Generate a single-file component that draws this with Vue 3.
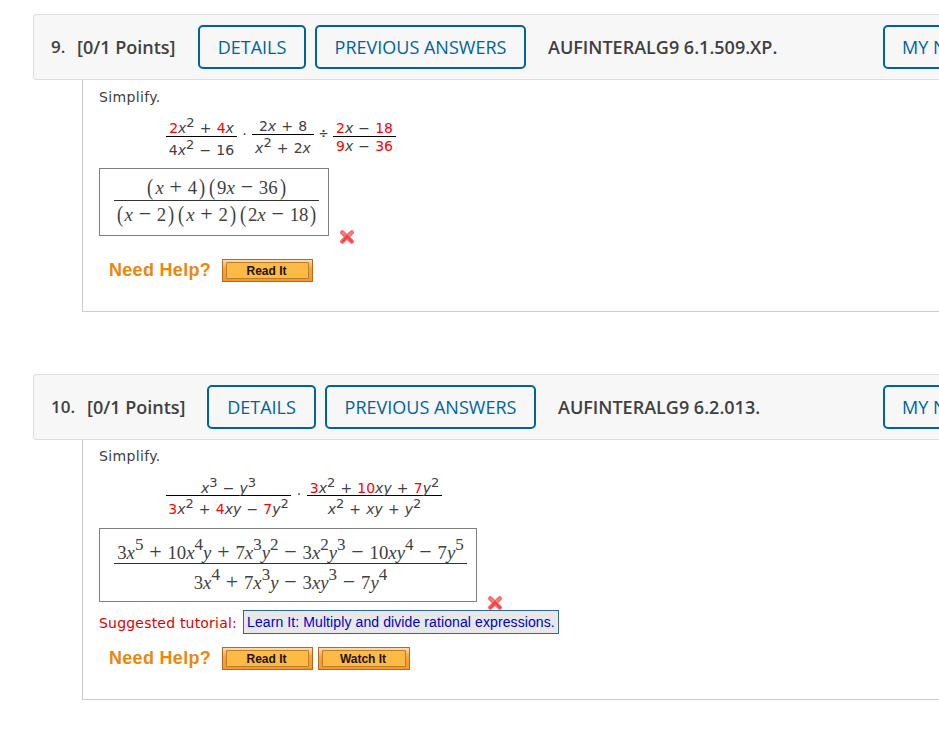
<script setup>
// Splits a compact expression string into styled pieces:
// [n] = randomised coefficient, ^n = exponent, letters = variables.
function parse(source) {
  const pieces = []
  const pattern = /\[(\d+)\]|\^(\d)|([a-z])|([+−])|(\d+)|([()])/g
  const kinds = ['coef', 'sup', 'var', 'op', 'digits', 'paren']
  for (const m of source.matchAll(pattern)) {
    const i = m.slice(1).findIndex((g) => g !== undefined)
    pieces.push({ kind: kinds[i], text: m[i + 1] })
  }
  return pieces
}

const questions = [
  {
    number: '9.',
    code: 'AUFINTERALG9 6.1.509.XP.',
    cls: 'first',
    given: [
      { width: 71, num: parse('[2]x^2 + [4]x'), den: parse('4x^2 − 16'), cls: 'tall' },
      { symbol: '·' },
      { width: 62, num: parse('2x + 8'), den: parse('x^2 + 2x'), cls: 'tall raised' },
      { symbol: '÷' },
      { width: 63, num: parse('[2]x − [18]'), den: parse('[9]x − [36]'), cls: '' },
    ],
    answer: { num: parse('(x + 4)(9x − 36)'), den: parse('(x − 2)(x + 2)(2x − 18)') },
    tutorial: '',
    help: ['Read It'],
  },
  {
    number: '10.',
    code: 'AUFINTERALG9 6.2.013.',
    cls: 'second',
    given: [
      { width: 125, num: parse('x^3 − y^3'), den: parse('[3]x^2 + [4]xy − [7]y^2'), cls: 'tall' },
      { symbol: '·' },
      { width: 135, num: parse('[3]x^2 + [10]xy + [7]y^2'), den: parse('x^2 + xy + y^2'), cls: 'tall' },
    ],
    answer: {
      num: parse('3x^5 + 10x^4y + 7x^3y^2 − 3x^2y^3 − 10xy^4 − 7y^5'),
      den: parse('3x^4 + 7x^3y − 3xy^3 − 7y^4'),
    },
    tutorial: 'Learn It: Multiply and divide rational expressions.',
    help: ['Read It', 'Watch It'],
  },
]
</script>

<template>
  <main class="page">
    <section v-for="q in questions" :key="q.number" class="question" :class="q.cls">
      <header class="bar">
        <span class="number">{{ q.number }}</span>
        <span class="points">[0/1 Points]</span>
        <button class="btn details">DETAILS</button>
        <button class="btn previous">PREVIOUS ANSWERS</button>
        <span class="code">{{ q.code }}</span>
        <button class="btn notes">MY NOTES</button>
      </header>
      <div class="content">
        <p class="prompt">Simplify.</p>
        <div class="given">
          <template v-for="(g, i) in q.given" :key="i">
            <span v-if="g.symbol" class="symbol" :class="g.symbol === '·' ? 'dot' : 'divide'">{{ g.symbol }}</span>
            <div v-else class="frac" :class="g.cls" :style="{ width: g.width + 'px' }">
              <div class="num"><span v-for="(p, k) in g.num" :key="k" :class="p.kind">{{ p.text }}</span></div>
              <div class="den"><span v-for="(p, k) in g.den" :key="k" :class="p.kind">{{ p.text }}</span></div>
            </div>
          </template>
        </div>
        <div class="response">
          <div class="answer">
            <div class="top"><span v-for="(p, k) in q.answer.num" :key="k" :class="p.kind">{{ p.text }}</span></div>
            <div class="bottom"><span v-for="(p, k) in q.answer.den" :key="k" :class="p.kind">{{ p.text }}</span></div>
          </div>
          <svg class="wrong" width="16" height="16" viewBox="0 0 16 16">
            <path d="M3.2 3.4 L12.8 12.6 M12.8 3.4 L3.2 12.6" stroke="#f4686c" stroke-width="4.4" stroke-linecap="round" />
            <path d="M3.4 3.5 L12.6 12.4 M12.6 3.5 L3.4 12.4" stroke="#fa7b7b" stroke-width="2.2" stroke-linecap="round" />
            <path d="M6.3 8.5 L8 7 L12.8 12.6 M7.8 8.5 L3.4 12.5" stroke="#ee4448" stroke-width="2.2" stroke-linecap="round" fill="none" />
          </svg>
        </div>
        <div v-if="q.tutorial" class="tutorial">
          <span class="suggested">Suggested tutorial:</span>
          <a class="learn">{{ q.tutorial }}</a>
        </div>
        <div class="help">
          <span class="need">Need Help?</span>
          <button v-for="h in q.help" :key="h" class="helpbtn"><span>{{ h }}</span></button>
        </div>
      </div>
    </section>
  </main>
</template>

<style>
body { background: #fff; overflow: hidden; }
</style>

<style scoped>
.page {
  box-sizing: border-box;
  width: 939px;
  height: 742px;
  overflow: hidden;
  padding: 14px 0 0 33px;
  color: #404040;
  font-family: Verdana, "DejaVu Sans", sans-serif;
  font-size: 14px;
}
.question { width: 1000px; }
.first { height: 360px; }
.bar {
  box-sizing: border-box;
  display: flex;
  align-items: center;
  width: 1000px;
  height: 66px;
  padding-left: 17px;
  border: 1px solid #ddd;
  border-radius: 3px;
  background: #f7f7f7;
  font: 600 18px/24px "Open Sans", sans-serif;
}
.number { width: 26px; padding-bottom: 1px; font-size: 17px; }
.points { width: 121px; white-space: nowrap; }
.second .number { width: 36px; }
.second .points { width: 120px; }
.btn {
  box-sizing: border-box;
  flex: none;
  height: 44px;
  padding: 0;
  border: 2px solid #00639c;
  border-radius: 5px;
  background: transparent;
  color: #00639c;
  font: 500 18px/24px "Open Sans", sans-serif;
  white-space: nowrap;
}
.details { width: 108px; }
.second .details { width: 109px; }
.previous { width: 211px; margin-left: 9px; }
.code { width: 335px; margin-left: 22px; flex: none; white-space: nowrap; }
.second .code { width: 325px; }
.notes { width: 122px; text-align: left; padding-left: 17px; }

.content {
  box-sizing: border-box;
  height: 232px;
  margin-left: 49px;
  padding-left: 16px;
  border-left: 1px solid #ccc;
  border-bottom: 1px solid #ccc;
}
.second .content { height: 260px; }
.prompt { margin: 0; height: 39px; padding-top: 8px; box-sizing: border-box; line-height: 18px; letter-spacing: .35px; }
.second .prompt { padding-top: 7px; }

.given { display: flex; height: 49px; padding-left: 67px; }
.frac { text-align: center; white-space: nowrap; }
.frac.raised { margin-top: -2px; }
.num { height: 17px; line-height: 18px; border-bottom: 1px solid #000; }
.den { line-height: 18px; }
.tall .den { padding-top: 4px; }
.second .num { height: 16px; }
.var { font-style: italic; }
.coef { color: #f00; }
.sup { font-size: 13px; line-height: 0; vertical-align: 6px; }
.op { display: inline-block; width: 22px; text-align: center; line-height: 18px; }
.symbol { text-align: center; line-height: 18px; }
.dot { width: 15px; padding-top: 6px; }
.second .dot { width: 16px; }
.divide { width: 19px; padding-top: 6px; font-weight: bold; font-size: 12px; }

.response { display: flex; align-items: flex-end; }
.answer {
  box-sizing: border-box;
  display: flex;
  flex-direction: column;
  width: 230px;
  height: 68px;
  padding: 7px 9px 0 14px;
  border: 1px solid #808080;
  font: 18.8px/24px "Liberation Serif", serif;
  text-align: center;
  white-space: nowrap;
}
.top { height: 24px; border-bottom: 1px solid #333; }
.bottom { padding-top: 2px; }
.answer .op { width: 24px; font-size: 22px; line-height: 20px; }
.answer .paren { display: inline-block; font-size: 23px; line-height: 20px; width: 10px; vertical-align: -1px; transform: scaleX(.8); }
.answer .sup { font-size: 17px; vertical-align: 9px; }
.second .answer { width: 378px; height: 74px; padding-top: 12px; }
.second .top { height: 22px; }
.second .bottom { padding-top: 7px; }
.wrong { margin: 0 0 -9px 10px; flex: none; }

.tutorial { display: flex; align-items: center; height: 24px; margin-top: 8px; }
.suggested { width: 144px; padding-top: 2px; color: #d00; white-space: nowrap; letter-spacing: .2px; }
.learn {
  box-sizing: border-box;
  width: 316px;
  height: 24px;
  padding-left: 3px;
  border: 1px solid #369;
  background: #e8e8e8;
  color: #00c;
  font: 14px/22px "Liberation Sans", sans-serif;
  letter-spacing: .1px;
  white-space: nowrap;
}
.help { display: flex; align-items: center; height: 23px; margin-top: 23px; padding-left: 10px; }
.second .help { margin-top: 13px; }
.need { width: 113px; padding-bottom: 1px; color: #ec870e; font: bold 18px/22px "Liberation Sans", sans-serif; letter-spacing: .3px; white-space: nowrap; }
.helpbtn {
  box-sizing: border-box;
  width: 91px;
  height: 23px;
  padding: 2px 3px;
  border: 1px solid #b06c20;
  background: linear-gradient(#ffdcae, #fba23d 40%, #f7952e);
  margin-right: 5px;
}
.helpbtn + .helpbtn { width: 92px; }
.helpbtn span {
  box-sizing: border-box;
  display: block;
  height: 17px;
  padding-right: 2px;
  border: 1px solid #bd7c28;
  border-radius: 1px;
  background: #fdba45;
  color: #1d1305;
  font: bold 12px/16px "Liberation Sans", sans-serif;
}
</style>
